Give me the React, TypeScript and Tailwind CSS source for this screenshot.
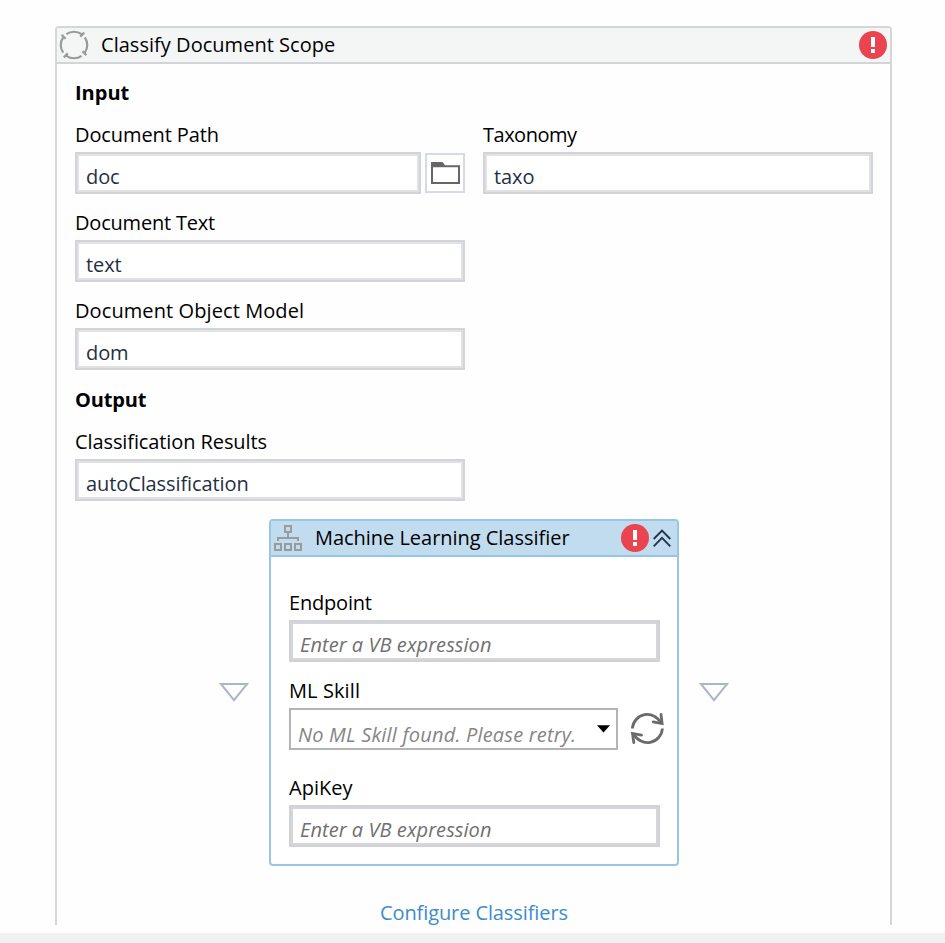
import type { ReactNode } from 'react';

function Label({ children, className = '' }: { children: ReactNode; className?: string }) {
  return <div className={`h-7 whitespace-nowrap leading-[30px] ${className}`}>{children}</div>;
}

function Field({ value, placeholder, className = '' }: { value?: string; placeholder?: string; className?: string }) {
  return (
    <div className={`mt-1 flex h-[42px] border-2 ${placeholder ? 'border-[#d1d2d7]' : 'border-[#d2d4d8]'} ${className}`}>
      <div
        className={`flex flex-1 items-center border-2 bg-white pt-[8px] pl-[7px] whitespace-nowrap ${
          placeholder ? 'border-[#d5d5da] text-[#707070] italic tracking-[0.06px]' : 'border-[#e0e1e4] text-[#1f3044] tracking-[-0.1px]'
        }`}
      >
        {value ?? placeholder}
      </div>
    </div>
  );
}

function ErrorBadge() {
  return (
    <svg width="28" height="28" viewBox="0 0 28 28" className="block shrink-0">
      <circle cx="14" cy="14" r="14" fill="#e9444f" />
      <path d="M12 6h4v10h-4zM12 18h4v4h-4z" fill="#fff" />
    </svg>
  );
}

function ScopeIcon() {
  return (
    <svg width="30" height="30" viewBox="0 0 30 30" fill="none" stroke="#999b9b" strokeWidth="2.2" className="block shrink-0">
      <path d="M7.4 4.2A13 13 0 0 1 22.6 4.2M25.8 7.4A13 13 0 0 1 25.8 22.6M22.6 25.8A13 13 0 0 1 7.4 25.8M4.2 22.6A13 13 0 0 1 4.2 7.4" />
      <path d="M21.2 6.6l4-4M23.4 21.2l4 4M8.8 23.4l-4 4M6.6 8.8l-4-4" />
    </svg>
  );
}

function TreeIcon() {
  return (
    <svg width="28" height="26" viewBox="0 0 28 26" fill="none" stroke="#999b9f" strokeWidth="2" className="block shrink-0">
      <path d="M11 1h6v6h-6zM14 8v4M4 16v-3h20v3M1 19h6v6H1zM11 19h6v6h-6zM21 19h6v6h-6z" />
    </svg>
  );
}

function DropTriangle() {
  return (
    <svg width="30" height="19" viewBox="0 0 30 19" fill="none" stroke="#adb5c6" strokeWidth="2" className="block">
      <path d="M1.9 1h26.2L15 17.2z" />
    </svg>
  );
}

function RefreshIcon() {
  return (
    <svg width="34" height="34" viewBox="0 0 34 34" fill="none" stroke="#6b6b6b" strokeWidth="2.8" className="block">
      <path d="M2.4 16.5A15 15 0 0 1 31 11.2M32.4 16.5A15 15 0 0 1 3.8 21.8" />
      <path d="M31 2.4l1.1 9.2-8.9-1.8M3.8 30.6L2.5 21.4l9 1.8" strokeLinecap="round" />
    </svg>
  );
}

export default function App() {
  return (
    <div className="flex h-[943px] w-[945px] flex-col overflow-hidden bg-[#fefefe] font-['Open_Sans','Noto_Sans',sans-serif] text-[20px] text-black">
      <div className="h-[907px] grow pt-[26px] pl-[55px]">
        <div className="h-[899px] w-[837px] rounded-t-[4px] border-2 border-b-0 border-[#d4d6d9]">
          <header className="flex h-9 items-center border-b-2 border-[#d2d4d8] bg-[#f4f6f6] pr-[3px] pl-[2px]">
            <ScopeIcon />
            <span className="ml-[12px] grow tracking-[0.03px]">Classify Document Scope</span>
            <ErrorBadge />
          </header>

          <main className="px-[18px] pt-[14px]">
            <Label className="font-bold">Input</Label>
            <div className="mt-[14px] flex gap-[18px]">
              <div className="w-[390px] shrink-0">
                <Label className="tracking-[-0.1px]">Document Path</Label>
                <div className="flex items-start">
                  <Field value="doc" className="w-[346px]" />
                  <button className="mt-[5px] ml-1 flex h-10 w-10 justify-center border-2 border-[#d6dae6] bg-white pt-[7px]">
                    <svg width="29" height="22" viewBox="0 0 29 22" className="block shrink-0">
                      <path d="M0 0h11.5l2.5 3.2h15V22H0zM2 6v14h25V6z" fill="#666" fillRule="evenodd" />
                      <path d="M2 5.5h25" stroke="#ddd" />
                    </svg>
                  </button>
                </div>
              </div>
              <div className="w-[390px] shrink-0">
                <Label className="tracking-[-0.5px]">Taxonomy</Label>
                <Field value="taxo" />
              </div>
            </div>
            <Label className="mt-[14px] tracking-[-0.2px]">Document Text</Label>
            <Field value="text" className="w-[390px]" />
            <Label className="mt-[14px] tracking-[0.09px]">Document Object Model</Label>
            <Field value="dom" className="w-[390px]" />
            <Label className="mt-[15px] font-bold tracking-[-0.15px]">Output</Label>
            <Label className="mt-[14px] tracking-[-0.1px]">Classification Results</Label>
            <Field value="autoClassification" className="w-[390px]" />

            <div className="mt-[18px] flex items-center pl-[144px]">
              <DropTriangle />
              <section className="ml-5 h-[347px] w-[410px] rounded-[4px] border-2 border-[#9ac6e5] bg-white">
                <header className="flex h-9 items-center border-b-2 border-[#97c5e6] bg-[#c2dcef] pr-[6px] pl-[3px]">
                  <TreeIcon />
                  <span className="ml-[13px] grow tracking-[-0.03px]">Machine Learning Classifier</span>
                  <ErrorBadge />
                  <svg width="18" height="18" viewBox="0 0 18 18" fill="none" stroke="#24344c" strokeWidth="1.9" className="ml-1 block shrink-0">
                    <path d="M.7 10L9 1.5 17.3 10M.7 17.3L9 8.8l8.3 8.5" />
                  </svg>
                </header>
                <div className="px-[18px] pt-[31px]">
                  <Label className="tracking-[-0.2px]">Endpoint</Label>
                  <Field placeholder="Enter a VB expression" className="w-[371px]" />
                  <Label className="mt-[14px] tracking-[0.1px]">ML Skill</Label>
                  <div className="mt-1 flex items-center">
                    <div className="flex h-[42px] w-[329px] shrink-0 items-center border-2 border-[#b4b4b4] bg-white pr-[6px] pl-[7px]">
                      <span className="grow pt-[11px] whitespace-nowrap text-[#858585] italic tracking-[0.18px]">
                        No ML Skill found. Please retry.
                      </span>
                      <svg width="13" height="8" viewBox="0 0 13 8" className="block shrink-0">
                        <path d="M0 .3h13L6.5 7.5z" />
                      </svg>
                    </div>
                    <div className="ml-3 shrink-0">
                      <RefreshIcon />
                    </div>
                  </div>
                  <Label className="mt-[23px]">ApiKey</Label>
                  <Field placeholder="Enter a VB expression" className="w-[371px]" />
                </div>
              </section>
              <div className="ml-5">
                <DropTriangle />
              </div>
            </div>
            <Label className="mt-8 pl-[305px] tracking-[-0.1px] text-[#3f8ccb]">Configure Classifiers</Label>
          </main>
        </div>
      </div>
      <footer className="h-[10px] shrink-0 bg-[#f1f1f1]" />
    </div>
  );
}
